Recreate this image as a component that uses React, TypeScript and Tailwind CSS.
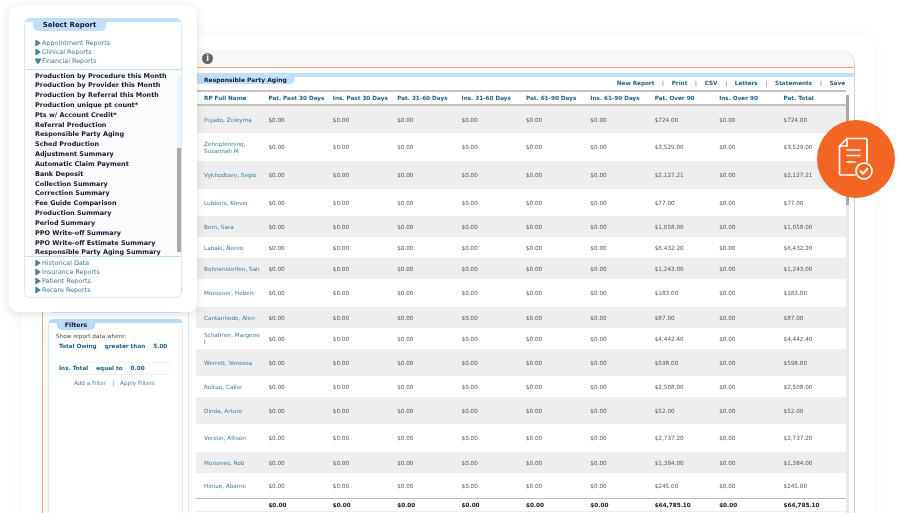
import React from 'react';

const columns = [
  'Pat. Past 30 Days',
  'Ins. Past 30 Days',
  'Pat. 31-60 Days',
  'Ins. 31-60 Days',
  'Pat. 61-90 Days',
  'Ins. 61-90 Days',
  'Pat. Over 90',
  'Ins. Over 90',
  'Pat. Total',
];

const rows = [
  { name: 'Pujado, Zuleyma', amount: '$724.00', height: 'h-[27px]' },
  { name: 'Zehnpfenning, Susannah M', amount: '$3,529.00', height: 'h-[28px]' },
  { name: 'Vykhodtsev, Segio', amount: '$2,127.21', height: 'h-[28px]' },
  { name: 'Lubbers, Klever', amount: '$77.00', height: 'h-[27px]' },
  { name: 'Bern, Sara', amount: '$1,058.00', height: 'h-[21px]' },
  { name: 'Labaki, Nereo', amount: '$6,432.20', height: 'h-[21px]' },
  { name: 'Bohnensteffen, Sali', amount: '$1,243.00', height: 'h-[21px]' },
  { name: 'Moessner, Hebert', amount: '$183.00', height: 'h-[28px]' },
  { name: 'Cantanhede, Alen', amount: '$87.00', height: 'h-[21px]' },
  { name: 'Schaffner, Margene I', amount: '$4,442.40', height: 'h-[21px]' },
  { name: 'Werrett, Venessa', amount: '$598.00', height: 'h-[27px]' },
  { name: 'Rollizo, Callie', amount: '$2,508.00', height: 'h-[21px]' },
  { name: 'Dinda, Arturo', amount: '$52.00', height: 'h-[27px]' },
  { name: 'Verstin, Allison', amount: '$2,737.20', height: 'h-[28px]' },
  { name: 'Moriones, Rob', amount: '$1,384.00', height: 'h-[21px]' },
  { name: 'Hintze, Abarne', amount: '$245.00', height: 'h-[25px]' },
];

const financialReports = [
  'Production by Procedure this Month',
  'Production by Provider this Month',
  'Production by Referral this Month',
  'Production unique pt count*',
  'Pts w/ Account Credit*',
  'Referral Production',
  'Responsible Party Aging',
  'Sched Production',
  'Adjustment Summary',
  'Automatic Claim Payment',
  'Bank Deposit',
  'Collection Summary',
  'Correction Summary',
  'Fee Guide Comparison',
  'Production Summary',
  'Period Summary',
  'PPO Write-off Summary',
  'PPO Write-off Estimate Summary',
  'Responsible Party Aging Summary',
];

const rowGrid = 'grid grid-cols-[64.4px_repeat(9,64.4px)] items-center pl-[8px] pt-[1px]';

const Arrow = ({ open = false }: { open?: boolean }) => (
  <svg width="6" height="6" viewBox="0 0 6 6" className="-mt-[1px] shrink-0 text-[#4b7f9f]" fill="currentColor">
    {open ? <path d="M0 .5h6v1.2L3.6 5.8H2.4L0 1.7z" /> : <path d="M.3 0h1.2v6H.3zM1.5 0L6 3 1.5 6z" />}
  </svg>
);

const ReportGroup = ({ label, open }: { label: string; open?: boolean }) => (
  <div className="flex h-[9px] items-center gap-[1px] pl-[10px] text-[6.4px] text-[#3f7a9f]">
    <Arrow open={open} />
    <span>{label}</span>
  </div>
);

const DocCheckIcon = () => (
  <svg width="36" height="44" viewBox="0 0 36 44" fill="none" stroke="#fff" strokeWidth="1.7" strokeLinecap="round" strokeLinejoin="round">
    <path d="M9 1.5h18.5a1.5 1.5 0 0 1 1.5 1.5v22" />
    <path d="M9 1.5 1.5 9v27.5a1.5 1.5 0 0 0 1.5 1.5h14" />
    <path d="M9 1.5V9H1.5" />
    <path d="M9 13h13M9 18.5h13M9 25h8" />
    <circle cx="26" cy="34" r="8" />
    <path d="m22.5 34.2 2.5 2.5 4.3-4.7" strokeWidth="2" />
  </svg>
);

const App: React.FC = () => {
  return (
    <div className="relative h-[513px] w-[900px] overflow-hidden bg-white font-['DejaVu_Sans',sans-serif]">
      {/* Outer shell */}
      <div className="ml-[21px] mt-[35px] flex h-[478px] w-[854px] rounded-t-[16px] bg-white pl-[21px] shadow-[0_0_14px_rgba(0,0,0,0.045)] blur-[0.25px]">
        {/* Left column */}
        <div className="flex w-[147px] shrink-0 flex-col border-x border-l-[#f5a56a] border-r-[#d5e8f8] px-[5px]">
          <div className="h-[278px] shrink-0 rounded-b-[6px] border border-[#d5e8f8]" />
          <div className="mt-[6px] flex-1 rounded-t-[5px] border-x border-[#d5e8f8]">
            <div className="h-[4px] rounded-t-[5px] bg-[#b9daf7]" />
            <div className="-mt-[4px] ml-[8px] flex h-[11px] w-[38px] items-center justify-center rounded-b-[5px] bg-[#b9daf7] pt-[1px] text-[6.2px] font-bold text-[#10162e]">
              Filters
            </div>
            <div className="mt-[2px] pl-[7px] text-[5.7px] text-[#444]">Show report data where:</div>
            <div className="mt-[1.5px] flex gap-[8px] pl-[10px] text-[5.7px] font-bold text-[#22618a]">
              <span>Total Owing</span>
              <span>greater than</span>
              <span>5.00</span>
            </div>
            <div className="ml-[10px] mt-[11px] h-[1px] w-[112px] bg-[#f2f2f2]" />
            <div className="ml-[10px] mt-[1px] flex gap-[8px] text-[5.7px] font-bold text-[#22618a]">
              <span>Ins. Total</span>
              <span>equal to</span>
              <span>0.00</span>
            </div>
            <div className="ml-[10px] mt-[2px] h-[1px] w-[112px] bg-[#f2f2f2]" />
            <div className="mt-[3.5px] flex justify-center gap-[6px] pr-[2px] text-[5.7px] text-[#4f83a6]">
              <span>Add a Filter</span>
              <span>|</span>
              <span>Apply Filters</span>
            </div>
          </div>
        </div>

        {/* Report window */}
        <div className="ml-[7px] mt-[15px] flex w-[659px] shrink-0 flex-col rounded-tr-[14px] border-r border-[#cfcfcf] pb-0">
          <div className="flex h-[17px] shrink-0 items-center rounded-tr-[14px] bg-[#f8f8f8] pl-[6px]">
            <span className="flex h-[11px] w-[11px] items-center justify-center rounded-full bg-[#666] text-[8px] font-bold text-white">
              i
            </span>
          </div>
          <div className="h-[1px] shrink-0 bg-[#f5a56a]" />
          <div className="mt-[5px] h-[4px] shrink-0 bg-[#bfdffb]" />
          <div className="relative h-[13px] shrink-0">
            <div className="absolute left-0 top-[-4px] flex h-[11px] w-[99px] items-center rounded-br-[5px] bg-[#bfdffb] pl-[8px] pt-[1px] text-[6px] font-bold text-[#10162e]">
              Responsible Party Aging
            </div>
            <div className="flex h-full items-center justify-end gap-[7.7px] pr-[9px] text-[5.7px] font-bold text-[#22618a]">
              <span>New Report</span>
              <span className="font-normal">|</span>
              <span>Print</span>
              <span className="font-normal">|</span>
              <span>CSV</span>
              <span className="font-normal">|</span>
              <span>Letters</span>
              <span className="font-normal">|</span>
              <span>Statements</span>
              <span className="font-normal">|</span>
              <span>Save</span>
            </div>
          </div>

          <div className="relative flex min-h-0 flex-1">
            <div className="w-[650px] shrink-0 overflow-hidden">
              <div className={`${rowGrid} h-[16px] border-y-2 border-y-[#c4c4c4] text-[5.7px] font-bold text-[#22618a]`}>
                <span>RP Full Name</span>
                {columns.map((col) => (
                  <span key={col} className="whitespace-nowrap">
                    {col}
                  </span>
                ))}
              </div>
              {rows.map((row, i) => (
                <div key={row.name} className={`${rowGrid} ${row.height} ${i % 2 === 0 ? 'bg-[#eeeeee]' : 'bg-white'} text-[5.7px] text-[#555]`}>
                  <span className="pr-[7px] leading-[7px] text-[#3f7a9f]">{row.name}</span>
                  {columns.map((col, c) => (
                    <span key={col}>{c === 6 || c === 8 ? row.amount : '$0.00'}</span>
                  ))}
                </div>
              ))}
              <div className={`${rowGrid} h-[14px] border-y border-b-[#eeeeee] border-t-[#bdbdbd] text-[5.7px] font-bold text-[#222]`}>
                <span />
                {columns.map((col, c) => (
                  <span key={col}>{c === 6 || c === 8 ? '$64,785.10' : '$0.00'}</span>
                ))}
              </div>
            </div>
            {/* Table scrollbar */}
            <div className="mt-[5px] w-[3px] shrink-0 bg-[#e3ecf5]">
              <div className="h-[110px] bg-[#a9a9a9]" />
            </div>
          </div>
        </div>
      </div>

      {/* Select Report card sits over the left column */}
      <div className="absolute left-[9px] top-[5px] h-[307px] w-[188px] rounded-[9px] bg-white px-[15px] pt-[13px] shadow-[0_2px_10px_rgba(0,0,0,0.13)]">
        <div className="h-[280px] overflow-hidden rounded-[6px] border-x border-b border-[#d5e8f8] blur-[0.25px]">
          <div className="h-[4px] bg-[#bfdffb]" />
          <div className="-mt-[4px] ml-[8px] flex h-[13px] w-[73px] items-center justify-center rounded-b-[5px] bg-[#bfdffb] pt-[1px] text-[7px] font-bold text-[#10162e]">
            Select Report
          </div>
          <div className="mt-[8px]">
            <ReportGroup label="Appointment Reports" />
            <ReportGroup label="Clinical Reports" />
            <ReportGroup label="Financial Reports" open />
          </div>
          <div className="mt-[3px] flex h-[188px] justify-between border-y border-[#bfdffb] bg-[#fbfbfb]">
            <div className="pl-[10px] pt-[1.5px]">
              {financialReports.map((report) => (
                <div key={report} className="h-[9.83px] whitespace-nowrap text-[6.46px] font-bold leading-[9.83px] text-[#10162e]">
                  {report}
                </div>
              ))}
            </div>
            <div className="mt-[5px] h-[177px] w-[4px] bg-[#ecf1f6]">
              <div className="mt-[73px] h-[104px] bg-[#a9a9a9]" />
            </div>
          </div>
          <div className="mt-[2px]">
            <ReportGroup label="Historical Data" />
            <ReportGroup label="Insurance Reports" />
            <ReportGroup label="Patient Reports" />
            <ReportGroup label="Recare Reports" />
          </div>
        </div>
      </div>

      {/* Orange badge */}
      <div className="absolute left-[817px] top-[120px] flex h-[78px] w-[78px] items-center justify-center rounded-full bg-[#f26522]">
        <DocCheckIcon />
      </div>
    </div>
  );
};

export default App;
